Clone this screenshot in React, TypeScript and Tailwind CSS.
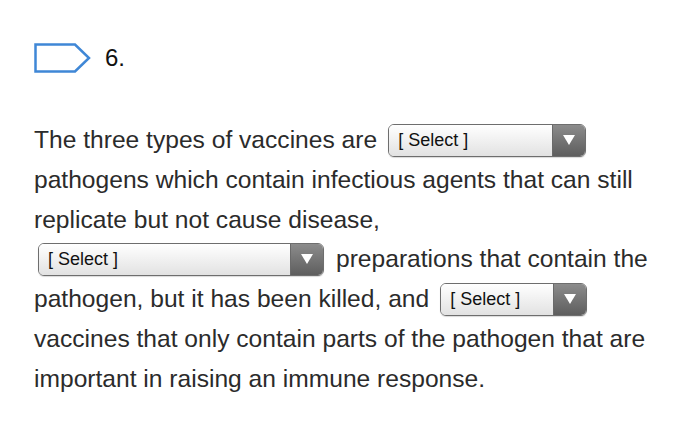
function Select({ width }: { width: number }) {
  return (
    <span
      className="inline-flex h-[33px] items-stretch overflow-hidden rounded-[6px] border border-[#6e6e6e] align-middle shadow-[0_1px_1px_rgba(0,0,0,0.15)]"
      style={{ width }}
    >
      <span className="flex flex-1 items-center bg-gradient-to-b from-white to-[#e2e2e2] pl-[9px] text-[18px] leading-none text-[#111]">
        [ Select ]
      </span>
      <span className="flex w-[33px] items-center justify-center border-l border-[#6a6a6a] bg-gradient-to-b from-[#8c8c8c] to-[#5e5e5e]">
        <svg width="12" height="10" viewBox="0 0 12 10">
          <path d="M0 0 H12 L6 10 Z" fill="#fff" />
        </svg>
      </span>
    </span>
  );
}

export default function App() {
  return (
    <div className="h-[445px] w-[700px] bg-white font-['Liberation_Sans',Arial,sans-serif] text-[#2b2b2b]">
      <div className="flex items-center pl-[34px] pt-[40px]">
        <svg width="57" height="30" viewBox="0 0 57 30">
          <path d="M1.5 1.5 H41 L55 15 L41 28.5 H1.5 Z" fill="none" stroke="#3f87d6" strokeWidth="2.5" />
        </svg>
        <span className="ml-[14px] text-[24px] text-[#111]">6.</span>
      </div>

      <div className="mt-[44px] pl-[34px] text-[24.6px] leading-[40px]">
        <div className="flex h-[40px] items-center gap-[11px]">
          <span>The three types of vaccines are</span>
          <Select width={198} />
        </div>
        <div className="h-[40px]">pathogens which contain infectious agents that can still</div>
        <div className="h-[39px]">replicate but not cause disease,</div>
        <div className="flex h-[40px] items-center gap-[12px] pl-[4px]">
          <Select width={286} />
          <span>preparations that contain the</span>
        </div>
        <div className="flex h-[40px] items-center gap-[11px]">
          <span>pathogen, but it has been killed, and</span>
          <Select width={147} />
        </div>
        <div className="h-[40px]">vaccines that only contain parts of the pathogen that are</div>
        <div className="h-[40px]">important in raising an immune response.</div>
      </div>
    </div>
  );
}
